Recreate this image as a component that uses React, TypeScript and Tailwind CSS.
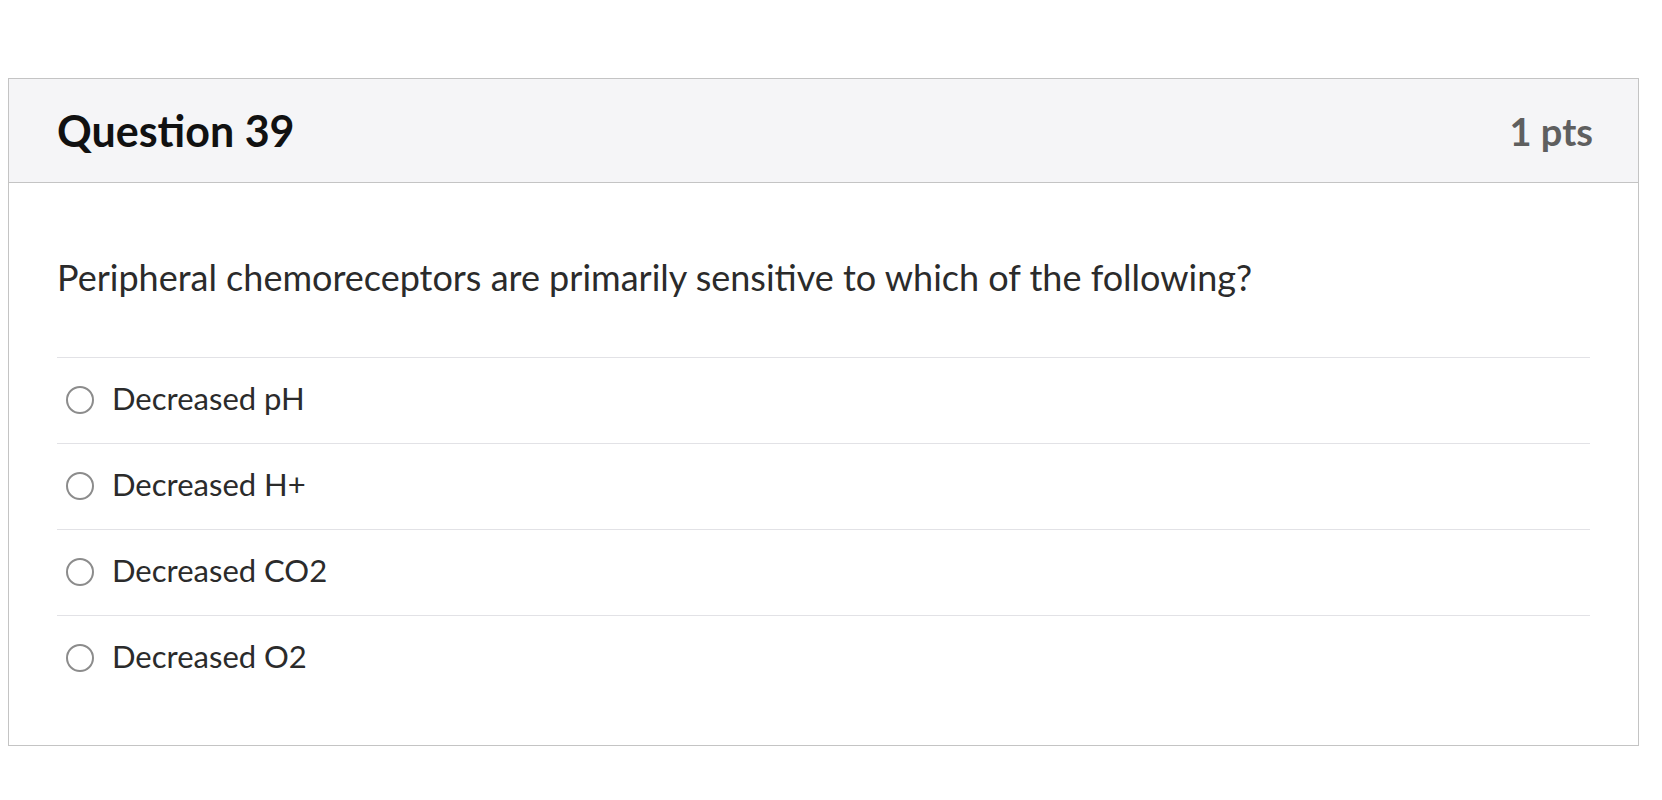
import React from "react";

const options = ["Decreased pH", "Decreased H+", "Decreased CO2", "Decreased O2"];

export default function App() {
  return (
    <div className="min-h-[800px] w-[1662px] bg-white pt-[78px]" style={{ fontFamily: "Lato, 'Open Sans', sans-serif" }}>
      <div className="ml-[8px] w-[1631px] border border-[#c4c4c4] bg-white">
        <div className="flex h-[104px] items-center justify-between border-b border-[#c4c4c4] bg-[#f5f5f7] pl-[48px] pr-[45px]">
          <div className="text-[43px] font-bold leading-none text-[#111111]">Question 39</div>
          <div className="text-[38px] font-bold leading-none text-[#5f5f5f]">1 pts</div>
        </div>
        <div className="px-[48px] pt-[70px] pb-[44px]">
          <p className="text-[36px] leading-[48px] text-[#2b2b2b]">
            Peripheral chemoreceptors are primarily sensitive to which of the following?
          </p>
          <div className="mt-[56px]">
            {options.map((o) => (
              <div key={o} className="flex items-start border-t border-[#e2e2e6] pt-[20px] pb-[25px]">
                <span className="ml-[9px] mt-[8px] block h-[28px] w-[28px] shrink-0 rounded-full border-2 border-[#8c8c8c] bg-white" />
                <span className="ml-[18px] text-[31px] leading-[40px] text-[#2b2b2b]">{o}</span>
              </div>
            ))}
          </div>
        </div>
      </div>
    </div>
  );
}
